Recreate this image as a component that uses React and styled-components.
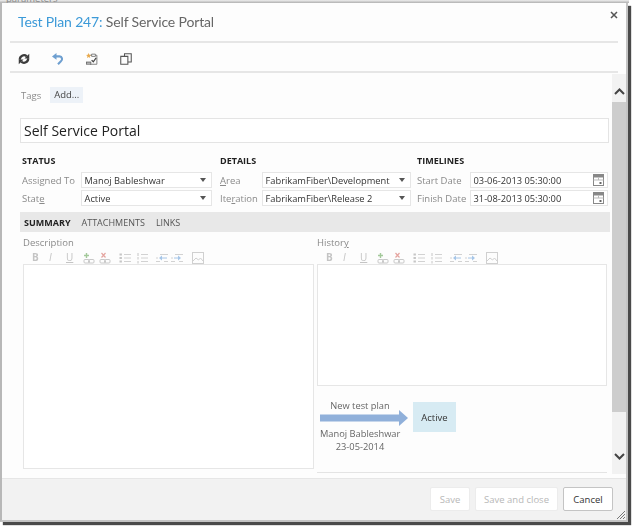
import React from 'react';
import styled, { createGlobalStyle } from 'styled-components';

const GlobalStyle = createGlobalStyle`
  html, body {
    margin: 0;
    padding: 0;
    height: 100%;
    background: #ffffff;
    overflow: hidden;
  }

  body {
    font-family: "Open Sans", "Noto Sans", "Liberation Sans", sans-serif;
    font-size: 10px;
    color: #333;
  }
`;

const Page = styled.div`
  width: 634px;
  height: 529px;
`;

const TopStrip = styled.div`
  width: 629px;
  height: 3px;
  overflow: hidden;
  background: linear-gradient(#efefef, #b0b0b0);

  > span {
    display: block;
    margin: -8px 0 0 6px;
    font-size: 9.5px;
    line-height: 13px;
    color: #888;
  }
`;

const Dialog = styled.div`
  position: relative;
  display: flex;
  flex-direction: column;
  width: 628px;
  height: 519px;
  box-sizing: border-box;
  background: #fdfdfd;
  border-left: 2px solid #b8b8b8;
  border-right: 2px solid #c4c4c4;
  border-bottom: 2px solid #c4c4c4;
  box-shadow: 3px 3px 1px #4a4a4a;
  filter: blur(0.3px);
`;

const Header = styled.header`
  display: flex;
  justify-content: space-between;
  flex: none;
  height: 35px;
  margin: 0 8px;
  padding: 3px 0 0 8px;
  border-bottom: 2px solid #e6e6e6;
`;

const Title = styled.h1`
  margin: 0;
  font-family: Lato, "Open Sans", sans-serif;
  font-size: 14px;
  font-weight: 400;
  letter-spacing: -0.15px;
  line-height: 32px;
  color: #666;

  > span {
    color: #3c9ad8;
  }
`;

const Close = styled.button`
  width: 8px;
  height: 14px;
  margin: 1px 0 0;
  padding: 0;
  border: 0;
  background: none;
  color: #555;
`;

const Toolbar = styled.div`
  display: flex;
  align-items: center;
  flex: none;
  gap: 22px;
  height: 24px;
  margin: 0 8px;
  padding: 4px 0 0 8px;
  border-bottom: 2px solid #e6e6e6;
`;

const ToolIcon = styled.svg`
  display: block;
  width: 12px;
  height: 12px;
`;

const Body = styled.div`
  display: flex;
  flex: 1;
  min-height: 0;
  margin-top: 1px;
`;

const Content = styled.div`
  flex: 1;
  min-width: 0;
  padding: 13px 0 0 18px;
`;

const TagsRow = styled.div`
  display: flex;
  align-items: center;
  gap: 9px;
  height: 16px;
`;

const MutedLabel = styled.span`
  margin-left: 1px;
  font-size: 9.5px;
  color: #8a8a8a;
`;

const AddTag = styled.span`
  padding: 0 4px;
  line-height: 16px;
  font-size: 9.5px;
  color: #444;
  background: #edf2f8;
`;

const NameInput = styled.div`
  width: 589px;
  height: 25px;
  margin-top: 15px;
  padding-left: 3px;
  box-sizing: border-box;
  font-size: 14px;
  line-height: 24px;
  color: #222;
  background: #fff;
  border: 1px solid #e4e4e4;
`;

const FieldGrid = styled.div`
  display: grid;
  grid-template-columns: 198px 197px 192px;
  width: 589px;
  margin: 11px 0 0 2px;
`;

const Section = styled.section`
  display: flex;
  flex-direction: column;
`;

const SectionTitle = styled.h2`
  margin: 0 0 4px;
  font-size: 9px;
  font-weight: 700;
  line-height: 14px;
  color: #222;
`;

const Field = styled.div`
  display: flex;
  align-items: center;
  height: 16px;
  margin-bottom: 2px;
`;

const FieldLabel = styled.label`
  flex: none;
  width: ${(p) => p.$width}px;
  font-size: 9.5px;
  color: #8a8a8a;

  u {
    text-underline-offset: 1px;
  }
`;

const FieldBox = styled.div`
  display: flex;
  align-items: center;
  justify-content: space-between;
  width: ${(p) => p.$width}px;
  height: 16px;
  padding: 0 3px 0 2.5px;
  box-sizing: border-box;
  font-size: 9.3px;
  color: #333;
  background: #fff;
  border: 1px solid #e6e6e6;
  white-space: nowrap;
  overflow: hidden;
`;

const Caret = styled.i`
  flex: none;
  width: 0;
  height: 0;
  margin-right: 2px;
  border-left: 3.5px solid transparent;
  border-right: 3.5px solid transparent;
  border-top: 4px solid #555;
`;

const TabBar = styled.nav`
  display: flex;
  align-items: center;
  gap: 11px;
  width: 590px;
  height: 20px;
  margin-top: 4px;
  padding-left: 4px;
  box-sizing: border-box;
  background: #e8e8e8;
`;

const Tab = styled.span`
  font-size: 9px;
  font-weight: ${(p) => (p.$active ? 700 : 400)};
  color: ${(p) => (p.$active ? '#222' : '#555')};
`;

const Columns = styled.div`
  display: grid;
  grid-template-columns: 294px 290px;
  margin: 4px 0 0 3px;
`;

const Column = styled.div`
  display: flex;
  flex-direction: column;
`;

const EditorLabel = styled.div`
  height: 14px;
  font-size: 9.5px;
  line-height: 14px;
  color: #8a8a8a;
`;

const EditorTools = styled.div`
  display: flex;
  align-items: center;
  height: 13px;
  margin: 1px 0 0 9px;
`;

const Letter = styled.span`
  width: 17px;
  font-size: 10px;
  line-height: 13px;
  font-weight: ${(p) => (p.$bold ? 700 : 400)};
  font-style: ${(p) => (p.$italic ? 'italic' : 'normal')};
  text-decoration: ${(p) => (p.$under ? 'underline' : 'none')};
  color: #c4c4c4;
`;

const MiniIcon = styled.svg`
  display: block;
  flex: none;
  width: 12px;
  height: 12px;
  margin-right: ${(p) => p.$gap}px;
`;

const EditorBox = styled.div`
  width: ${(p) => p.$width}px;
  height: ${(p) => p.$height}px;
  box-sizing: border-box;
  background: #fff;
  border: 1px solid #e6e6e6;
`;

const Workflow = styled.div`
  display: flex;
  align-items: flex-start;
  width: 290px;
  height: 87px;
  padding: 13px 0 0 3px;
  box-sizing: border-box;
  border-bottom: 1px solid #e4e4e4;
`;

const Transition = styled.div`
  display: flex;
  flex-direction: column;
  width: 88px;
`;

const TransitionText = styled.div`
  width: 80px;
  font-size: 9.3px;
  line-height: 13px;
  text-align: center;
  white-space: nowrap;
  color: #666;
`;

const Arrow = styled.svg`
  display: block;
  width: 88px;
  height: 16px;
  margin: -2px 0 1px;
`;

const StateBox = styled.div`
  display: flex;
  align-items: center;
  justify-content: center;
  width: 43px;
  height: 30px;
  margin: 3px 0 0 5px;
  font-size: 9.5px;
  color: #333;
  background: #d7ebf3;
`;

const Scrollbar = styled.div`
  display: flex;
  flex-direction: column;
  flex: none;
  width: 14px;
  margin-bottom: 4px;
  background: #f2f2f2;
`;

const ScrollButton = styled.div`
  display: flex;
  align-items: center;
  justify-content: center;
  flex: none;
  height: ${(p) => p.$height}px;
  padding-top: ${(p) => p.$top ?? 0}px;
  box-sizing: border-box;
`;

const ScrollThumb = styled.div`
  flex: none;
  height: ${(p) => p.$height}px;
  background: #cdcdcd;
`;

const ScrollSpace = styled.div`
  flex: 1;
`;

const Footer = styled.footer`
  display: flex;
  justify-content: flex-end;
  gap: 5px;
  flex: none;
  height: 42px;
  padding: 8px 13px 0 0;
  box-sizing: border-box;
  background: #f2f2f2;
  border-top: 1px solid #e6e6e6;
`;

const Button = styled.button`
  width: ${(p) => p.$width}px;
  height: 24px;
  padding: 0;
  font-family: inherit;
  font-size: 9.5px;
  color: ${(p) => (p.$primary ? '#333' : '#b8b8b8')};
  background: #fff;
  border: 1px solid ${(p) => (p.$primary ? '#c4c4c4' : '#ececec')};
  border-radius: 2px;
`;

const Grip = styled.svg`
  position: absolute;
  right: 0;
  bottom: 0;
  width: 11px;
  height: 11px;
`;

const RefreshIcon = () => (
  <ToolIcon viewBox="0 0 16 16" fill="none" stroke="#3c3c3c" strokeWidth="3">
    <path d="M2.5 9a5.5 5.5 0 0 1 9.2-4.6" />
    <path d="M13.5 7a5.5 5.5 0 0 1-9.2 4.6" />
    <path d="M15 1v6.4H8.6z" fill="#3c3c3c" stroke="none" />
    <path d="M1 15V8.6h6.4z" fill="#3c3c3c" stroke="none" />
  </ToolIcon>
);

const UndoIcon = () => (
  <ToolIcon viewBox="0 0 16 16" fill="none">
    <path d="M5 4.5h5a3.6 3.6 0 0 1 1.8 6.6L8 15" stroke="#6e9fd0" strokeWidth="2.8" />
    <path d="M0 4.5 6 0v9z" fill="#6e9fd0" />
  </ToolIcon>
);

const PlanIcon = () => (
  <ToolIcon viewBox="0 0 16 16" fill="none">
    <path d="M5.5 3h9v12h-9" stroke="#777" strokeWidth="1.2" />
    <path d="M7.5 1.5h5v3h-5z" fill="#fff" stroke="#777" strokeWidth="1.2" />
    <path d="M7.5 9.5l2.2 2.2 3.8-5.2" stroke="#444" strokeWidth="1.6" />
    <path d="M3.5 0l1 2.2 2.4.3-1.8 1.6.5 2.4-2.1-1.2-2.1 1.2.5-2.4L0 2.5l2.4-.3z" fill="#e8a94c" />
    <path d="M0 11.5h7v4H0z" fill="#666" />
    <path d="M1 13.5h5" stroke="#fff" />
  </ToolIcon>
);

const CopyIcon = () => (
  <ToolIcon viewBox="0 0 16 16" fill="none" stroke="#555" strokeWidth="1.4">
    <path d="M6 4V1h9v11h-4.5" />
    <path d="M1 4.5h9.5V15H1z" />
  </ToolIcon>
);

const LinkIcon = ({ remove, $gap }) => (
  <MiniIcon viewBox="0 0 12 12" fill="none" $gap={$gap}>
    <rect x="1" y="7.5" width="5.5" height="3.5" rx="1" stroke="#c8c8c8" />
    <rect x="5.5" y="7.5" width="5.5" height="3.5" rx="1" stroke="#c8c8c8" />
    {remove ? (
      <path d="M2.5 1l4 4.5M6.5 1l-4 4.5" stroke="#e5a5a0" strokeWidth="1.2" />
    ) : (
      <path d="M3.5 1v5M1 3.5h5" stroke="#a3c99a" strokeWidth="1.4" />
    )}
  </MiniIcon>
);

const ListIcon = ({ numbered, $gap }) => (
  <MiniIcon viewBox="0 0 12 12" fill="none" stroke="#d2d2d2" $gap={$gap}>
    <path d="M5 2.5h7M5 6h7M5 9.5h7" />
    {numbered ? (
      <path d="M2 1v3M2 5v2.5M2 9v2.5" stroke="#c6c6c6" />
    ) : (
      <path d="M.5 2.5h2.4M.5 6h2.4M.5 9.5h2.4" stroke="#c6c6c6" strokeWidth="2" />
    )}
  </MiniIcon>
);

const IndentIcon = ({ right, $gap }) => (
  <MiniIcon viewBox="0 0 12 12" fill="none" $gap={$gap}>
    <path d="M4 2.5h8M0 9.5h4M8 9.5h4M0 6h2" stroke="#d2d2d2" />
    <path d={right ? 'M3 6h5' : 'M5 6h6'} stroke="#a6c6e8" />
    <path d={right ? 'M10 6 7 3.5v5z' : 'M3 6l3-2.5v5z'} fill="#a6c6e8" />
  </MiniIcon>
);

const ImageIcon = () => (
  <MiniIcon viewBox="0 0 12 12" fill="none" stroke="#d0d0d0" $gap={0}>
    <rect x=".5" y=".5" width="11" height="11" />
    <path d="M1 9l3-3 2.5 2 2-2 2.5 3" />
  </MiniIcon>
);

const DateIcon = () => (
  <svg width="11" height="12" viewBox="0 0 11 12" fill="none">
    <rect x=".5" y=".5" width="10" height="11" stroke="#888" fill="#fff" />
    <path d="M.5 1h10v2.5H.5z" fill="#888" />
    <path d="M5.5 3.5V6M.5 6h10" stroke="#bbb" />
    <path d="M6.5 8h2v2h-2z" fill="#666" />
  </svg>
);

const EditorToolbar = () => (
  <EditorTools>
    <Letter $bold>B</Letter>
    <Letter $italic>I</Letter>
    <Letter $under>U</Letter>
    <LinkIcon $gap={4} />
    <LinkIcon remove $gap={8} />
    <ListIcon $gap={5} />
    <ListIcon numbered $gap={8} />
    <IndentIcon $gap={3} />
    <IndentIcon right $gap={9} />
    <ImageIcon />
  </EditorTools>
);

export default function App() {
  return (
    <>
      <GlobalStyle />
      <Page>
        <TopStrip>
          <span>parameters</span>
        </TopStrip>
        <Dialog>
          <Header>
            <Title>
              <span>Test Plan 247:</span> Self Service Portal
            </Title>
            <Close aria-label="Close">
              <svg width="8" height="8" viewBox="0 0 8 8" stroke="currentColor" strokeWidth="1.5">
                <path d="M1 1l6 6M7 1 1 7" />
              </svg>
            </Close>
          </Header>

          <Toolbar>
            <RefreshIcon />
            <UndoIcon />
            <PlanIcon />
            <CopyIcon />
          </Toolbar>

          <Body>
            <Content>
              <TagsRow>
                <MutedLabel>Tags</MutedLabel>
                <AddTag>Add...</AddTag>
              </TagsRow>

              <NameInput>Self Service Portal</NameInput>

              <FieldGrid>
                <Section>
                  <SectionTitle>STATUS</SectionTitle>
                  <Field>
                    <FieldLabel $width={59}>Assigned To</FieldLabel>
                    <FieldBox $width={131}>
                      Manoj Bableshwar
                      <Caret />
                    </FieldBox>
                  </Field>
                  <Field>
                    <FieldLabel $width={59}>
                      Stat<u>e</u>
                    </FieldLabel>
                    <FieldBox $width={131}>
                      Active
                      <Caret />
                    </FieldBox>
                  </Field>
                </Section>

                <Section>
                  <SectionTitle>DETAILS</SectionTitle>
                  <Field>
                    <FieldLabel $width={42}>
                      <u>A</u>rea
                    </FieldLabel>
                    <FieldBox $width={149}>
                      FabrikamFiber\Development
                      <Caret />
                    </FieldBox>
                  </Field>
                  <Field>
                    <FieldLabel $width={42}>
                      Ite<u>r</u>ation
                    </FieldLabel>
                    <FieldBox $width={149}>
                      FabrikamFiber\Release 2
                      <Caret />
                    </FieldBox>
                  </Field>
                </Section>

                <Section>
                  <SectionTitle>TIMELINES</SectionTitle>
                  <Field>
                    <FieldLabel $width={53}>Start Date</FieldLabel>
                    <FieldBox $width={138}>
                      03-06-2013 05:30:00
                      <DateIcon />
                    </FieldBox>
                  </Field>
                  <Field>
                    <FieldLabel $width={53}>Finish Date</FieldLabel>
                    <FieldBox $width={138}>
                      31-08-2013 05:30:00
                      <DateIcon />
                    </FieldBox>
                  </Field>
                </Section>
              </FieldGrid>

              <TabBar>
                <Tab $active>SUMMARY</Tab>
                <Tab>ATTACHMENTS</Tab>
                <Tab>LINKS</Tab>
              </TabBar>

              <Columns>
                <Column>
                  <EditorLabel>Description</EditorLabel>
                  <EditorToolbar />
                  <EditorBox $width={291} $height={205} />
                </Column>
                <Column>
                  <EditorLabel>
                    Histor<u>y</u>
                  </EditorLabel>
                  <EditorToolbar />
                  <EditorBox $width={290} $height={122} />
                  <Workflow>
                    <Transition>
                      <TransitionText>New test plan</TransitionText>
                      <Arrow viewBox="0 0 88 16">
                        <path d="M0 4.5h79V0l9 8-9 8v-4.5H0z" fill="#90b0da" />
                      </Arrow>
                      <TransitionText>
                        Manoj Bableshwar
                        <br />
                        23-05-2014
                      </TransitionText>
                    </Transition>
                    <StateBox>Active</StateBox>
                  </Workflow>
                </Column>
              </Columns>
            </Content>

            <Scrollbar>
              <ScrollButton $height={28} $top={6}>
                <svg width="11" height="7" viewBox="0 0 11 7" fill="none" stroke="#444" strokeWidth="2">
                  <path d="M1 6l4.5-4.5L10 6" />
                </svg>
              </ScrollButton>
              <ScrollThumb $height={310} />
              <ScrollSpace />
              <ScrollButton $height={36}>
                <svg width="11" height="7" viewBox="0 0 11 7" fill="none" stroke="#444" strokeWidth="2">
                  <path d="M1 1l4.5 4.5L10 1" />
                </svg>
              </ScrollButton>
            </Scrollbar>
          </Body>

          <Footer>
            <Button $width={40}>Save</Button>
            <Button $width={83}>Save and close</Button>
            <Button $width={50} $primary>
              Cancel
            </Button>
          </Footer>

          <Grip viewBox="0 0 11 11" stroke="#777">
            <path d="M10 2 2 10M10 5 5 10M10 8l-2 2" />
          </Grip>
        </Dialog>
      </Page>
    </>
  );
}
